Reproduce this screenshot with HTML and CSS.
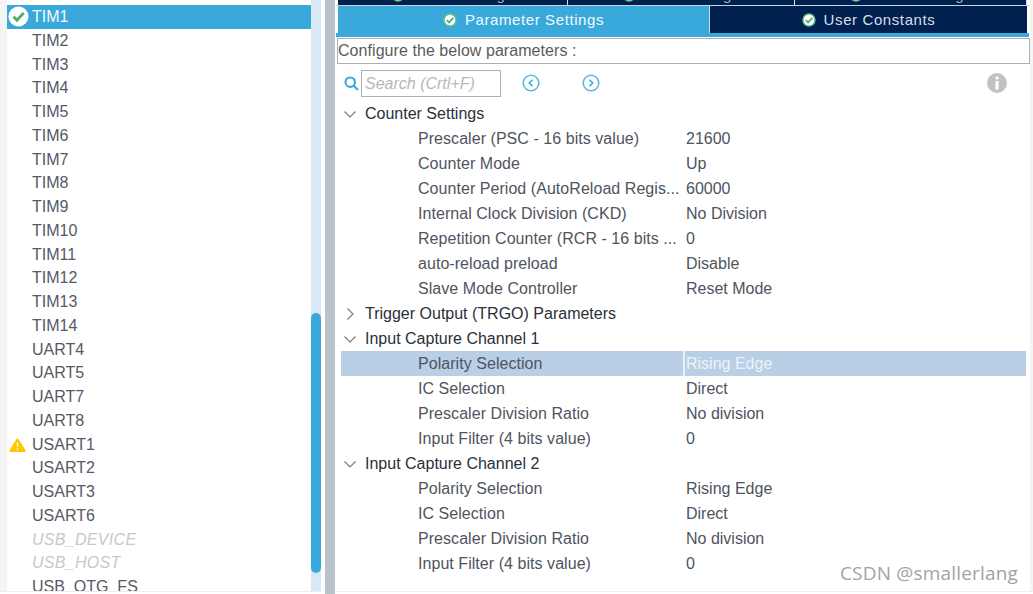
FILE: index.html
```html
<!DOCTYPE html>
<html lang="en">
<head>
<meta charset="utf-8">
<title>Timer configuration</title>
<link rel="stylesheet" href="styles.css">
</head>
<body>
<div class="app">
  <aside class="side">
    <ul class="list">
      <li class="item selected"><svg class="status" viewBox="0 0 22 22"><circle cx="11" cy="11" r="10.5" fill="#fff"/><path d="M5.800 11.200l3.600 3.600 7-7.400" fill="none" stroke="#4caf6a" stroke-width="3"/></svg>TIM1</li>
      <li class="item">TIM2</li>
      <li class="item">TIM3</li>
      <li class="item">TIM4</li>
      <li class="item">TIM5</li>
      <li class="item">TIM6</li>
      <li class="item">TIM7</li>
      <li class="item">TIM8</li>
      <li class="item">TIM9</li>
      <li class="item">TIM10</li>
      <li class="item">TIM11</li>
      <li class="item">TIM12</li>
      <li class="item">TIM13</li>
      <li class="item">TIM14</li>
      <li class="item">UART4</li>
      <li class="item">UART5</li>
      <li class="item">UART7</li>
      <li class="item">UART8</li>
      <li class="item"><svg class="status warn" viewBox="0 0 18 15"><path d="M9 .5a1.200 1.200 0 0 1 1 .6l7.600 12a1.200 1.200 0 0 1-1 1.900H1.400a1.200 1.200 0 0 1-1-1.900L8 1.100a1.200 1.200 0 0 1 1-.6z" fill="#fdc800"/><path d="M9 4.500v5M9 11v1.800" stroke="#fff" stroke-width="1.500"/></svg>USART1</li>
      <li class="item">USART2</li>
      <li class="item">USART3</li>
      <li class="item">USART6</li>
      <li class="item off">USB_DEVICE</li>
      <li class="item off">USB_HOST</li>
      <li class="item">USB_OTG_FS</li>
    </ul>
    <div class="track"><div class="thumb"></div></div>
  </aside>
  <div class="splitter"></div>
  <main class="main">
    <div class="tabs-top">
      <div class="tab-stub s1"><svg class="tick" viewBox="0 0 14 14"><circle cx="7" cy="7" r="6" fill="#fff" stroke="#63c088" stroke-width="1.400"/></svg>NVIC Settings</div>
      <div class="tab-stub s2"><svg class="tick" viewBox="0 0 14 14"><circle cx="7" cy="7" r="6" fill="#fff" stroke="#63c088" stroke-width="1.400"/></svg>DMA Settings</div>
      <div class="tab-stub s3"><svg class="tick" viewBox="0 0 14 14"><circle cx="7" cy="7" r="6" fill="#fff" stroke="#63c088" stroke-width="1.400"/></svg>GPIO Settings</div>
    </div>
    <div class="tabs">
      <div class="tab active"><svg class="tick" viewBox="0 0 14 14"><circle cx="7" cy="7" r="6" fill="#fff" stroke="#63c088" stroke-width="1.400"/><path d="M3.800 7.200l2.300 2.300 4.200-4.600" fill="none" stroke="#4caf6a" stroke-width="1.800"/></svg>Parameter Settings</div>
      <div class="tab"><svg class="tick" viewBox="0 0 14 14"><circle cx="7" cy="7" r="6" fill="#fff" stroke="#63c088" stroke-width="1.400"/><path d="M3.800 7.200l2.300 2.300 4.200-4.600" fill="none" stroke="#4caf6a" stroke-width="1.800"/></svg>User Constants</div>
    </div>
    <div class="rule"></div>
    <div class="hint">Configure the below parameters :</div>
    <div class="tools">
      <svg class="search-icon" viewBox="0 0 14 14"><circle cx="5.800" cy="5.800" r="4.400" fill="none" stroke="#39a9dc" stroke-width="2"/><path d="M9 9l4 4" stroke="#39a9dc" stroke-width="2"/></svg>
      <div class="search">Search (Crtl+F)</div>
      <svg class="nav prev" viewBox="0 0 18 18"><circle cx="9" cy="9" r="7.800" fill="none" stroke="#5db8e2" stroke-width="1.600"/><path d="M10.500 5.800L7.300 9l3.200 3.200" fill="none" stroke="#39a9dc" stroke-width="1.600"/></svg>
      <svg class="nav next" viewBox="0 0 18 18"><circle cx="9" cy="9" r="7.800" fill="none" stroke="#5db8e2" stroke-width="1.600"/><path d="M7.500 5.800L10.700 9l-3.200 3.200" fill="none" stroke="#39a9dc" stroke-width="1.600"/></svg>
      <svg class="info" viewBox="0 0 20 20"><circle cx="10" cy="10" r="10" fill="#c2c2c2"/><rect x="8.400" y="3.500" width="3.200" height="3" rx="1.200" fill="#fff"/><rect x="8.400" y="8" width="3.200" height="8.500" fill="#fff"/></svg>
    </div>
    <div class="tree">
      <div class="group"><svg class="caret" viewBox="0 0 14 14"><path d="M1.500 4.500L7 10l5.500-5.500" fill="none" stroke="#7d7d7d" stroke-width="1.200"/></svg>Counter Settings</div>
      <div class="row"><span class="key">Prescaler (PSC - 16 bits value)</span><span class="val">21600</span></div>
      <div class="row"><span class="key">Counter Mode</span><span class="val">Up</span></div>
      <div class="row"><span class="key">Counter Period (AutoReload Regis...</span><span class="val">60000</span></div>
      <div class="row"><span class="key">Internal Clock Division (CKD)</span><span class="val">No Division</span></div>
      <div class="row"><span class="key">Repetition Counter (RCR - 16 bits ...</span><span class="val">0</span></div>
      <div class="row"><span class="key">auto-reload preload</span><span class="val">Disable</span></div>
      <div class="row"><span class="key">Slave Mode Controller</span><span class="val">Reset Mode</span></div>
      <div class="group"><svg class="caret" viewBox="0 0 14 14"><path d="M4.500 1.500L10 7l-5.500 5.500" fill="none" stroke="#7d7d7d" stroke-width="1.200"/></svg>Trigger Output (TRGO) Parameters</div>
      <div class="group"><svg class="caret" viewBox="0 0 14 14"><path d="M1.500 4.500L7 10l5.500-5.500" fill="none" stroke="#7d7d7d" stroke-width="1.200"/></svg>Input Capture Channel 1</div>
      <div class="row picked"><span class="key">Polarity Selection</span><span class="val">Rising Edge</span></div>
      <div class="row"><span class="key">IC Selection</span><span class="val">Direct</span></div>
      <div class="row"><span class="key">Prescaler Division Ratio</span><span class="val">No division</span></div>
      <div class="row"><span class="key">Input Filter (4 bits value)</span><span class="val">0</span></div>
      <div class="group"><svg class="caret" viewBox="0 0 14 14"><path d="M1.500 4.500L7 10l5.500-5.500" fill="none" stroke="#7d7d7d" stroke-width="1.200"/></svg>Input Capture Channel 2</div>
      <div class="row"><span class="key">Polarity Selection</span><span class="val">Rising Edge</span></div>
      <div class="row"><span class="key">IC Selection</span><span class="val">Direct</span></div>
      <div class="row"><span class="key">Prescaler Division Ratio</span><span class="val">No division</span></div>
      <div class="row"><span class="key">Input Filter (4 bits value)</span><span class="val">0</span></div>
    </div>
  </main>
</div>
<div class="watermark">CSDN @smallerlang</div>
</body>
</html>
```
FILE: styles.css
```css
* { box-sizing: border-box; }
html, body { margin: 0; height: 100%; overflow: hidden; background: #fff; }
body { font-family: "Liberation Sans", Arial, sans-serif; font-size: 16px; color: #555a66; }
.app { display: flex; width: 1033px; height: 594px; }
.side { display: flex; flex: none; width: 321px; height: 592px; padding-left: 7px; background: #f4f4f4; border-bottom: 1px solid #eee; }
.list { list-style: none; margin: 0; padding: 5px 0 0; width: 304px; height: 100%; background: #fff; overflow: hidden; }
.item { position: relative; height: 23.750px; line-height: 24.750px; padding-left: 25px; white-space: nowrap; }
.item.selected { background: #39a9dc; color: #f2f9fd; }
.item.off { color: #c3c9d0; font-style: italic; letter-spacing: .3px; }
.status { position: absolute; left: 1px; top: 1px; width: 21px; height: 21px; }
.status.warn { left: 2px; top: 5px; width: 17px; height: 14px; }
.track { width: 10px; height: 100%; background: #d9e8f5; padding-top: 313px; }
.thumb { height: 260px; background: #39a9dc; border-radius: 5px; }
.splitter { flex: none; width: 10px; margin-left: 4px; margin-right: 1px; background: #b9c4ca; }
.main { flex: none; width: 697px; height: 592px; border-bottom: 1px solid #eee; border-right: 3px solid #f4f4f4; }
.tabs-top { display: flex; height: 6px; padding-left: 2px; border-bottom: 1px solid #c9d3dc; }
.tab-stub { display: flex; align-items: flex-end; justify-content: center; gap: 6px; height: 5px; padding-bottom: 3px; overflow: hidden; background: #002050; border-right: 1px solid #d5dde5; color: #9fb0c4; font-size: 15px; line-height: 14px; letter-spacing: .6px; white-space: nowrap; }
.s1 { width: 230px; } .s2 { width: 227px; } .s3 { width: 232px; }
.tabs { display: flex; height: 27px; padding-left: 2px; }
.tab { display: flex; align-items: center; justify-content: center; gap: 8px; height: 27px; width: 318px; background: #002050; color: #d9dfe8; font-size: 15px; letter-spacing: .6px; border-left: 1px solid #d5dde5; }
.tab.active { width: 371px; background: #39a9dc; color: #f2f9fd; border-left: 0; }
.tick { width: 14px; height: 14px; flex: none; }
.rule { height: 4px; background: #39a9dc; margin-right: 1px; }
.hint { height: 26px; margin: 1px 0 0 1px; padding-left: 0; line-height: 24px; border: 1px solid #aab0b5; color: #5f5a58; letter-spacing: .06px; white-space: nowrap; }
.tools { display: flex; align-items: center; height: 32px; padding: 0 0 0 8px; margin-top: 3px; }
.search-icon { width: 15px; height: 15px; margin-right: 2px; flex: none; }
.search { width: 140px; height: 27px; line-height: 25px; padding-left: 3px; border: 1px solid #aab0b5; color: #b4b8bd; font-style: italic; white-space: nowrap; }
.nav { width: 18px; height: 18px; flex: none; }
.prev { margin-left: 21px; }
.next { margin-left: 42px; }
.info { width: 20px; height: 20px; margin-left: auto; margin-right: 23px; flex: none; }
.tree { padding: 2px 4px 0 5px; }
.group { display: flex; align-items: center; height: 25px; padding-left: 2px; color: #2a2f3a; white-space: nowrap; }
.caret { width: 14px; height: 14px; margin-right: 8px; flex: none; }
.row { display: flex; height: 25px; line-height: 25px; white-space: nowrap; color: #4f5460; }
.key { flex: none; width: 342px; padding-left: 77px; overflow: hidden; letter-spacing: .05px; }
.val { flex: 1; padding-left: 1px; border-left: 2px solid transparent; }
.picked { background: #b8cfe6; }
.picked .val { color: #edf3f9; border-left-color: #e8f0f8; }
.watermark { position: absolute; right: 15px; top: 560px; font-family: "Open Sans", sans-serif; font-size: 19px; letter-spacing: .18px; color: #a3a3a3; white-space: nowrap; }
```
